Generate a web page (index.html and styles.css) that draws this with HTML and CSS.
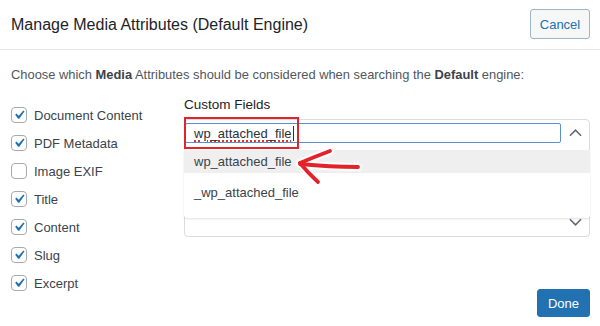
FILE: index.html
```html
<!DOCTYPE html>
<html>
<head>
<meta charset="utf-8">
<link rel="stylesheet" href="styles.css">
</head>
<body>
<div class="modal">
  <header class="head">
    <h1 class="title">Manage Media Attributes (Default Engine)</h1>
    <button class="btn btn-cancel">Cancel</button>
  </header>
  <p class="desc">Choose which <strong>Media</strong> Attributes should be considered when searching the <strong>Default</strong> engine:</p>
  <div class="body">
    <ul class="checks">
      <li><span class="cb on"><svg viewBox="0 0 20 20"><path d="M14.83 4.89l1.34.94-5.81 8.38H9.02L5.78 9.67l1.34-1.25 2.57 2.4z"/></svg></span>Document Content</li>
      <li><span class="cb on"><svg viewBox="0 0 20 20"><path d="M14.83 4.89l1.34.94-5.81 8.38H9.02L5.78 9.67l1.34-1.25 2.57 2.4z"/></svg></span>PDF Metadata</li>
      <li><span class="cb"></span>Image EXIF</li>
      <li><span class="cb on"><svg viewBox="0 0 20 20"><path d="M14.83 4.89l1.34.94-5.81 8.38H9.02L5.78 9.67l1.34-1.25 2.57 2.4z"/></svg></span>Title</li>
      <li><span class="cb on"><svg viewBox="0 0 20 20"><path d="M14.83 4.89l1.34.94-5.81 8.38H9.02L5.78 9.67l1.34-1.25 2.57 2.4z"/></svg></span>Content</li>
      <li><span class="cb on"><svg viewBox="0 0 20 20"><path d="M14.83 4.89l1.34.94-5.81 8.38H9.02L5.78 9.67l1.34-1.25 2.57 2.4z"/></svg></span>Slug</li>
      <li><span class="cb on"><svg viewBox="0 0 20 20"><path d="M14.83 4.89l1.34.94-5.81 8.38H9.02L5.78 9.67l1.34-1.25 2.57 2.4z"/></svg></span>Excerpt</li>
    </ul>
    <div class="fields">
      <div class="label">Custom Fields</div>
      <div class="select">
        <div class="search-row">
          <div class="input"><span class="typed">wp_attached_file</span><span class="caret"></span></div>
          <svg class="chev" viewBox="0 0 14 8"><polyline points="1,7 7,1 13,7"/></svg>
        </div>
        <svg class="chev chev-down" viewBox="0 0 14 8"><polyline points="1,1 7,7 13,1"/></svg>
        <ul class="dropdown">
          <li class="hl">wp_attached_file</li>
          <li>_wp_attached_file</li>
        </ul>
        <div class="redbox"></div>
        <svg class="arrow" viewBox="0 0 75 45">
          <g class="glow"><path d="M40 6 Q24 12 10 18"/><path d="M10 18 Q18 28 28 37"/><path d="M10 19 Q40 22 68 22"/></g>
          <g class="ink"><path d="M40 6 Q24 12 10 18"/><path d="M10 18 Q18 28 28 37"/><path d="M10 19 Q40 22 68 22"/></g>
        </svg>
      </div>
      <button class="btn btn-done">Done</button>
    </div>
  </div>
</div>
</body>
</html>
```
FILE: styles.css
```css
* { box-sizing: border-box; }
html, body { margin: 0; padding: 0; background: #fff; }
body { width: 600px; height: 326px; overflow: hidden; font-family: "Liberation Sans", Arial, sans-serif; color: #3c434a; }
.modal { width: 600px; }
.head { height: 50px; display: flex; align-items: center; justify-content: space-between; padding: 0 10px 0 11px; border-bottom: 1px solid #e6e6e8; }
.title { margin: 0; font-size: 16px; font-weight: 400; color: #1d2327; }
.btn { font-family: inherit; font-size: 13px; border-radius: 3px; cursor: pointer; }
.btn-cancel { width: 60px; height: 30px; margin-top: -1px; background: #f6f7f7; border: 1px solid #9fb4cf; color: #2271b1; }
.desc { margin: 16px 0 0 11px; font-size: 12.9px; line-height: 18px; color: #50575e; }
.desc strong { font-weight: 700; color: #3c434a; }
.body { display: flex; margin-top: 12px; }
.checks { list-style: none; margin: 0; padding: 5px 0 0 11px; width: 184px; }
.checks li { height: 28px; display: flex; align-items: center; font-size: 13px; color: #3c434a; }
.cb { width: 16px; height: 16px; border: 1px solid #a7aaad; border-radius: 4px; margin-right: 7px; display: flex; align-items: center; justify-content: center; background: #fff; }
.cb svg { width: 18px; height: 18px; fill: #2271b1; flex: none; }
.fields { width: 406px; display: flex; flex-direction: column; }
.label { font-size: 13.5px; line-height: 18px; color: #1d2327; font-weight: 500; }
.select { position: relative; margin-top: 5px; height: 118px; border: 1px solid #dcdcde; border-radius: 4px; }
.search-row { display: flex; align-items: center; padding: 3px 0 0 0; }
.input { width: 376px; height: 20px; border: 1px solid #5b8fd0; border-radius: 2px; display: flex; align-items: center; padding-left: 8px; font-size: 13px; color: #2c3338; }
.typed { text-decoration: underline dotted #e0342f; text-underline-offset: 3px; text-decoration-thickness: 1.5px; }
.caret { width: 1px; height: 15px; background: #2c3338; margin-left: 1px; }
.chev { width: 13px; height: 8px; margin-left: 8px; fill: none; stroke: #646970; stroke-width: 1.7; }
.chev-down { position: absolute; left: 384px; top: 98px; margin: 0; }
.dropdown { position: absolute; left: -1px; right: -1px; top: 30px; height: 68px; margin: 0; padding: 0; list-style: none; background: #fff; box-shadow: 0 1px 2px rgba(0,0,0,0.12); border-radius: 0 0 3px 3px; }
.dropdown li { height: 23px; line-height: 23px; padding-left: 10px; font-size: 13px; color: #3c434a; }
.dropdown li + li { margin-top: 8px; }
.dropdown li.hl { background: #efefef; }
.redbox { position: absolute; left: -1px; top: -3px; width: 115px; height: 32px; border: 2px solid #e1242b; }
.arrow { position: absolute; left: 105px; top: 25px; width: 75px; height: 45px; overflow: visible; }
.arrow path { fill: none; stroke-linecap: round; }
.arrow .glow path { stroke: #fff; stroke-width: 8; opacity: 0.9; }
.arrow .ink path { stroke: #e3222b; stroke-width: 3.8; }
.btn-done { align-self: flex-end; margin: 52px 0 0 0; width: 53px; height: 28px; background: #2271b1; border: 1px solid #2271b1; color: #fff; }
```
